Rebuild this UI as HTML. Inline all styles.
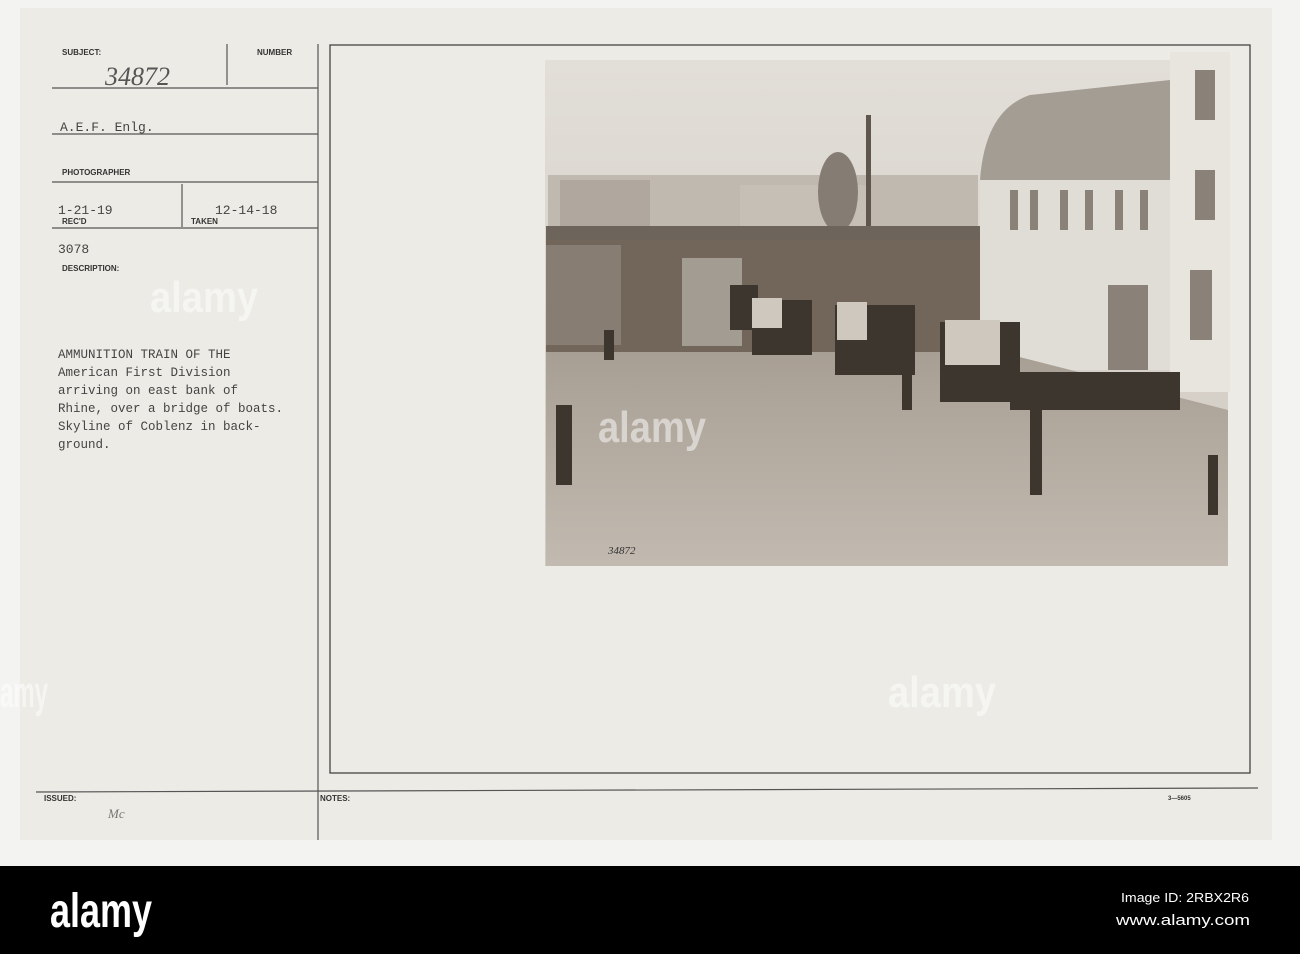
<!DOCTYPE html>
<html><head><meta charset="utf-8"><style>
html,body{margin:0;padding:0;width:1300px;height:954px;overflow:hidden;background:#f4f4f2}
svg{display:block}
.mono{font-family:"Liberation Mono",monospace}
.sans{font-family:"Liberation Sans",sans-serif}
.lb{font-family:"Liberation Sans",sans-serif;font-weight:bold;font-size:8px;fill:#333}
.ty{font-family:"Liberation Mono",monospace;font-size:13px;fill:#444}
.wm{font-family:"Liberation Sans",sans-serif;font-weight:bold;fill:#fff;opacity:0.5}
</style></head><body>
<svg width="1300" height="954" viewBox="0 0 1300 954">
<defs>
<linearGradient id="sky" x1="0" y1="0" x2="0" y2="1"><stop offset="0" stop-color="#e2ded8"/><stop offset="1" stop-color="#cfc9c1"/></linearGradient>
<linearGradient id="road" x1="0" y1="0" x2="0" y2="1"><stop offset="0" stop-color="#a89f94"/><stop offset="1" stop-color="#c2bab0"/></linearGradient>
</defs>
<rect x="0" y="0" width="1300" height="866" fill="#f3f3f1"/>
<rect x="20" y="8" width="1252" height="832" fill="#ecebe6"/>
<g stroke="#555" stroke-width="1.2">
<line x1="318" y1="44" x2="318" y2="840"/>
<line x1="52" y1="88" x2="318" y2="88"/>
<line x1="227" y1="44" x2="227" y2="85"/>
<line x1="52" y1="134" x2="318" y2="134"/>
<line x1="52" y1="182" x2="318" y2="182"/>
<line x1="182" y1="184" x2="182" y2="227"/>
<line x1="52" y1="228" x2="318" y2="228"/>
<line x1="36" y1="792" x2="1258" y2="788"/>
</g>
<rect x="330" y="45" width="920" height="728" fill="none" stroke="#444" stroke-width="1.3"/>
<text class="lb" x="62" y="55">SUBJECT:</text>
<text class="lb" x="257" y="55">NUMBER</text>
<text x="105" y="85" style="font-family:'Liberation Serif',serif;font-style:italic;font-size:26px;fill:#555">34872</text>
<text class="ty" x="60" y="131">A.E.F. Enlg.</text>
<text class="lb" x="62" y="175">PHOTOGRAPHER</text>
<text class="ty" x="58" y="214">1-21-19</text>
<text class="ty" x="215" y="214">12-14-18</text>
<text class="lb" x="62" y="224">REC'D</text>
<text class="lb" x="191" y="224">TAKEN</text>
<text class="ty" x="58" y="253">3078</text>
<text class="lb" x="62" y="271">DESCRIPTION:</text>
<g>
<text class="ty" style="font-size:12.5px" x="58" y="358">AMMUNITION TRAIN OF THE</text>
<text class="ty" style="font-size:12.5px" x="58" y="376">American First Division</text>
<text class="ty" style="font-size:12.5px" x="58" y="394">arriving on east bank of</text>
<text class="ty" style="font-size:12.5px" x="58" y="412">Rhine, over a bridge of boats.</text>
<text class="ty" style="font-size:12.5px" x="58" y="430">Skyline of Coblenz in back-</text>
<text class="ty" style="font-size:12.5px" x="58" y="448">ground.</text>
</g>
<text class="lb" x="44" y="801">ISSUED:</text>
<text x="108" y="818" style="font-family:'Liberation Serif',serif;font-style:italic;font-size:13px;fill:#777">Mc</text>
<text class="lb" x="320" y="801">NOTES:</text>
<text class="lb" x="1168" y="800" style="font-size:6px">3—5605</text>
<!-- photo -->
<g>
<rect x="545" y="60" width="683" height="506" fill="url(#sky)"/>
<rect x="548" y="175" width="430" height="55" fill="#c0b9af"/>
<rect x="560" y="180" width="90" height="48" fill="#b0a89e"/>
<rect x="740" y="185" width="130" height="43" fill="#c6bfb6"/>
<ellipse cx="838" cy="192" rx="20" ry="40" fill="#857d73"/>
<rect x="866" y="115" width="5" height="115" fill="#5f574e"/>
<rect x="546" y="226" width="434" height="14" fill="#6d655b"/>
<rect x="546" y="240" width="434" height="112" fill="#716659"/>
<rect x="546" y="245" width="75" height="100" fill="#877d72"/>
<rect x="682" y="258" width="60" height="88" fill="#a39c93"/>
<path d="M980 180 Q985 110 1030 95 L1170 80 L1170 180 Z" fill="#a49d94"/>
<rect x="980" y="180" width="190" height="190" fill="#e0dcd6"/>
<rect x="1170" y="52" width="60" height="340" fill="#e8e5df"/>
<g fill="#8a8279">
<rect x="1010" y="190" width="8" height="40"/><rect x="1030" y="190" width="8" height="40"/><rect x="1060" y="190" width="8" height="40"/><rect x="1085" y="190" width="8" height="40"/><rect x="1115" y="190" width="8" height="40"/><rect x="1140" y="190" width="8" height="40"/>
<rect x="1195" y="70" width="20" height="50"/><rect x="1195" y="170" width="20" height="50"/><rect x="1190" y="270" width="22" height="70"/>
<rect x="1108" y="285" width="40" height="85"/>
</g>
<path d="M546 352 L1000 352 L1228 410 L1228 566 L546 566 Z" fill="url(#road)"/>
<g fill="#3d362f">
<rect x="730" y="285" width="28" height="45"/>
<rect x="752" y="300" width="60" height="55"/>
<rect x="835" y="305" width="80" height="70"/>
<rect x="940" y="322" width="80" height="80"/>
<rect x="1010" y="372" width="170" height="38"/>
<rect x="556" y="405" width="16" height="80"/>
<rect x="1030" y="405" width="12" height="90"/>
<rect x="1208" y="455" width="10" height="60"/>
<rect x="902" y="360" width="10" height="50"/>
<rect x="604" y="330" width="10" height="30"/>
</g>
<g fill="#cfc8bf"><rect x="752" y="298" width="30" height="30"/><rect x="837" y="302" width="30" height="38"/><rect x="945" y="320" width="55" height="45"/></g>
<text x="608" y="554" style="font-family:'Liberation Serif',serif;font-style:italic;font-size:11px;fill:#333">34872</text>
</g>
<!-- watermark -->
<text class="wm" x="150" y="312" font-size="44" textLength="108" lengthAdjust="spacingAndGlyphs">alamy</text>
<text class="wm" x="598" y="442" font-size="44" textLength="108" lengthAdjust="spacingAndGlyphs">alamy</text>
<text class="wm" x="0" y="707" font-size="44" textLength="48" lengthAdjust="spacingAndGlyphs">amy</text>
<text class="wm" x="888" y="707" font-size="44" textLength="108" lengthAdjust="spacingAndGlyphs">alamy</text>
<!-- bottom bar -->
<rect x="0" y="866" width="1300" height="88" fill="#000"/>
<text x="50" y="927" style="font-family:'Liberation Sans',sans-serif;font-weight:bold;font-size:48px;fill:#fff" textLength="102" lengthAdjust="spacingAndGlyphs">alamy</text>
<text x="1121" y="902" style="font-family:'Liberation Sans',sans-serif;font-size:13px;fill:#fff" textLength="128" lengthAdjust="spacingAndGlyphs">Image ID: 2RBX2R6</text>
<text x="1116" y="925" style="font-family:'Liberation Sans',sans-serif;font-size:15px;fill:#fff" textLength="134" lengthAdjust="spacingAndGlyphs">www.alamy.com</text>
</svg>
</body></html>
